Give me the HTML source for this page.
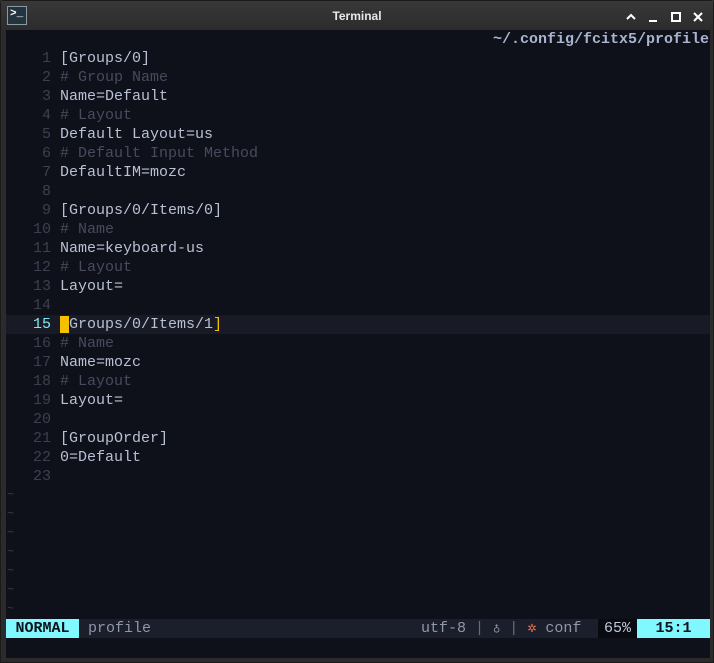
<!DOCTYPE html>
<html><head><style>
*{margin:0;padding:0;box-sizing:border-box}
body{width:714px;height:663px;background:#2f2f2f;overflow:hidden;font-family:"Liberation Mono",monospace;}
.win{position:absolute;left:0;top:0;width:714px;height:663px;background:#2b2b2b;border:1px solid #1a1a1a;border-radius:4px 4px 0 0}
.title{position:absolute;left:0;top:0;width:712px;height:29px;background:linear-gradient(#383838,#2c2c2c);color:#e8e8e8;font:bold 12px "Liberation Sans",sans-serif;text-align:center;line-height:30px}
.icon{position:absolute;left:6px;top:5px;width:20px;height:19px;border:1px solid #8a9aa4;background:#24343e;color:#fff;font:bold 11px "Liberation Mono",monospace;line-height:15px;text-align:left;padding-left:2px}
.b{position:absolute;background:#fff}
.term{position:absolute;left:5px;top:29px;width:704px;height:628px;background:#0f111a;overflow:hidden}
.row{position:absolute;left:0;height:19px;line-height:19px;font-size:15px;white-space:pre;width:704px}
.n{color:#3b4050;display:inline-block;width:45px;text-align:right}
.t{color:#b8c0d4;margin-left:9px}
.c{color:#464b5d;margin-left:9px}
.tl{color:#363b4c;font-size:12px;padding-left:1px}
.sb span{position:absolute;top:0;height:19px}
</style></head><body>
<div class="win">
<div class="title"><div class="icon">&gt;_</div>Terminal
<svg style="position:absolute;left:620px;top:9px" width="90" height="14" viewBox="0 0 90 14">
<path d="M6 9 L10 5 L14 9" stroke="#fff" stroke-width="2" fill="none"/>
<rect x="28" y="10" width="8" height="2" fill="#fff"/>
<rect x="51" y="3" width="8" height="8" stroke="#fff" stroke-width="2" fill="none"/>
<path d="M73 3 L81 11 M81 3 L73 11" stroke="#fff" stroke-width="2"/>
</svg></div>
<div class="term">
<div class="row" style="top:0;text-align:right;color:#a9b4cf;font-weight:bold;padding-right:1px">~/.config/fcitx5/profile</div>
<div class="row" style="top:19px"><span class="n">1</span><span class="t">[Groups/0]</span></div>
<div class="row" style="top:38px"><span class="n">2</span><span class="c"># Group Name</span></div>
<div class="row" style="top:57px"><span class="n">3</span><span class="t">Name=Default</span></div>
<div class="row" style="top:76px"><span class="n">4</span><span class="c"># Layout</span></div>
<div class="row" style="top:95px"><span class="n">5</span><span class="t">Default Layout=us</span></div>
<div class="row" style="top:114px"><span class="n">6</span><span class="c"># Default Input Method</span></div>
<div class="row" style="top:133px"><span class="n">7</span><span class="t">DefaultIM=mozc</span></div>
<div class="row" style="top:152px"><span class="n">8</span></div>
<div class="row" style="top:171px"><span class="n">9</span><span class="t">[Groups/0/Items/0]</span></div>
<div class="row" style="top:190px"><span class="n">10</span><span class="c"># Name</span></div>
<div class="row" style="top:209px"><span class="n">11</span><span class="t">Name=keyboard-us</span></div>
<div class="row" style="top:228px"><span class="n">12</span><span class="c"># Layout</span></div>
<div class="row" style="top:247px"><span class="n">13</span><span class="t">Layout=</span></div>
<div class="row" style="top:266px"><span class="n">14</span></div>
<div class="row" style="top:285px;background:#181b26"><span class="n" style="color:#7fe8f0">15</span><span class="t"><span style="background:#f5c000;color:#f5c000">[</span>Groups/0/Items/1<span style="color:#f5c000">]</span></span></div>
<div class="row" style="top:304px"><span class="n">16</span><span class="c"># Name</span></div>
<div class="row" style="top:323px"><span class="n">17</span><span class="t">Name=mozc</span></div>
<div class="row" style="top:342px"><span class="n">18</span><span class="c"># Layout</span></div>
<div class="row" style="top:361px"><span class="n">19</span><span class="t">Layout=</span></div>
<div class="row" style="top:380px"><span class="n">20</span></div>
<div class="row" style="top:399px"><span class="n">21</span><span class="t">[GroupOrder]</span></div>
<div class="row" style="top:418px"><span class="n">22</span><span class="t">0=Default</span></div>
<div class="row" style="top:437px"><span class="n">23</span></div>
<div class="row tl" style="top:456px">~</div>
<div class="row tl" style="top:475px">~</div>
<div class="row tl" style="top:494px">~</div>
<div class="row tl" style="top:513px">~</div>
<div class="row tl" style="top:532px">~</div>
<div class="row tl" style="top:551px">~</div>
<div class="row tl" style="top:570px">~</div>
<div class="row sb" style="top:589px;background:#1b1e2b;color:#8f97ab"><span style="left:0;width:73px;background:#80f8ff;color:#0f111a;font-weight:bold;text-align:center">NORMAL</span><span style="left:82px">profile</span><span style="left:415px">utf-8 <b style="color:#666c80;font-weight:normal">|</b> <b style="font-size:12px;font-weight:normal">♁</b> <b style="color:#666c80;font-weight:normal">|</b> <b style="color:#f07050;font-weight:normal">✲</b> conf</span><span style="left:592px;width:39px;background:#090b10;color:#c0c8dc;text-align:center">65%</span><span style="left:631px;width:73px;background:#80f8ff;color:#0f111a;font-weight:bold;text-align:center">15:1</span></div>
</div>
</div>
</body></html>
